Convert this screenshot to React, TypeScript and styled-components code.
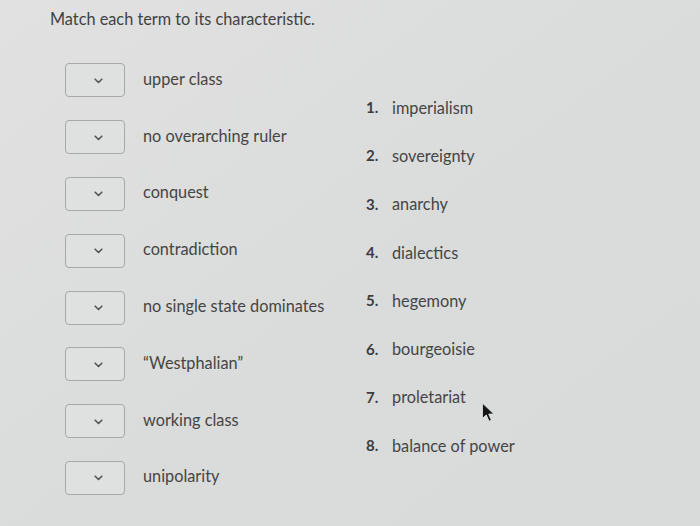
import React from "react";
import styled, { createGlobalStyle } from "styled-components";

const terms = [
  "upper class",
  "no overarching ruler",
  "conquest",
  "contradiction",
  "no single state dominates",
  "\u201cWestphalian\u201d",
  "working class",
  "unipolarity",
];

const options = [
  "imperialism",
  "sovereignty",
  "anarchy",
  "dialectics",
  "hegemony",
  "bourgeoisie",
  "proletariat",
  "balance of power",
];

function Chevron() {
  return (
    <svg width="9" height="6" viewBox="0 0 9 6" fill="none">
      <path
        d="M1.2 1.2 L4.5 4.5 L7.8 1.2"
        stroke="#555"
        strokeWidth="1.6"
        strokeLinecap="round"
        strokeLinejoin="round"
      />
    </svg>
  );
}

function Pointer() {
  return (
    <svg width="16" height="22" viewBox="0 0 14 20">
      <path
        d="M1 1 L1 15 L4.5 11.8 L7 17.5 L9.2 16.5 L6.8 11 L11.5 11 Z"
        fill="#151515"
        stroke="#e8e8e8"
        strokeWidth="0.8"
        strokeLinejoin="round"
      />
    </svg>
  );
}

export default function App() {
  return (
    <React.Fragment>
      <GlobalStyle />
      <Page>
        <Title>Match each term to its characteristic.</Title>
        <Columns>
          <TermList>
            {terms.map((term, index) => (
              <TermRow key={index}>
                <Select>
                  <Chevron />
                </Select>
                <TermText>{term}</TermText>
              </TermRow>
            ))}
          </TermList>
          <OptionList>
            {options.map((option, index) => (
              <OptionRow key={index}>
                <OptionNumber>{index + 1}.</OptionNumber>
                <OptionText>{option}</OptionText>
              </OptionRow>
            ))}
          </OptionList>
        </Columns>
        <Cursor>
          <Pointer />
        </Cursor>
      </Page>
    </React.Fragment>
  );
}

const GlobalStyle = createGlobalStyle`
  html, body {
    margin: 0;
    padding: 0;
    background: #dcdedd;
  }
  body {
    font-family: Lato, "Open Sans", sans-serif;
  }
`;

const Page = styled.div`
  position: relative;
  width: 700px;
  height: 526px;
  box-sizing: border-box;
  padding: 9px 0 0 50px;
  background: linear-gradient(
    to bottom right,
    #e0e1e0,
    #dadcdb 55%,
    #d8dbda
  );
  overflow: hidden;
`;

const Title = styled.div`
  font-size: 16.3px;
  line-height: 20px;
  color: #424242;
`;

const Columns = styled.div`
  display: grid;
  grid-template-columns: 301px auto;
  margin-top: 23px;
  padding-left: 15px;
`;

const TermList = styled.div`
  display: flex;
  flex-direction: column;
`;

const TermRow = styled.div`
  height: 56.8px;
  display: flex;
  align-items: center;
  gap: 18px;
`;

const Select = styled.div`
  width: 60px;
  height: 34px;
  box-sizing: border-box;
  border: 1px solid #a7a9a9;
  border-radius: 4px;
  background: #dfe1e0;
  display: flex;
  align-items: center;
  justify-content: flex-end;
  padding-right: 21px;
  padding-top: 1px;
`;

const TermText = styled.span`
  font-size: 16.3px;
  color: #454545;
  margin-top: -4px;
`;

const OptionList = styled.div`
  display: flex;
  flex-direction: column;
  padding-top: 31px;
`;

const OptionRow = styled.div`
  height: 48.3px;
  display: flex;
  align-items: center;
`;

const OptionNumber = styled.span`
  width: 26px;
  font-size: 15px;
  font-weight: 700;
  color: #3d3d3d;
`;

const OptionText = styled.span`
  font-size: 16.3px;
  color: #454545;
`;

const Cursor = styled.div`
  position: absolute;
  left: 481px;
  top: 402px;
  line-height: 0;
`;
